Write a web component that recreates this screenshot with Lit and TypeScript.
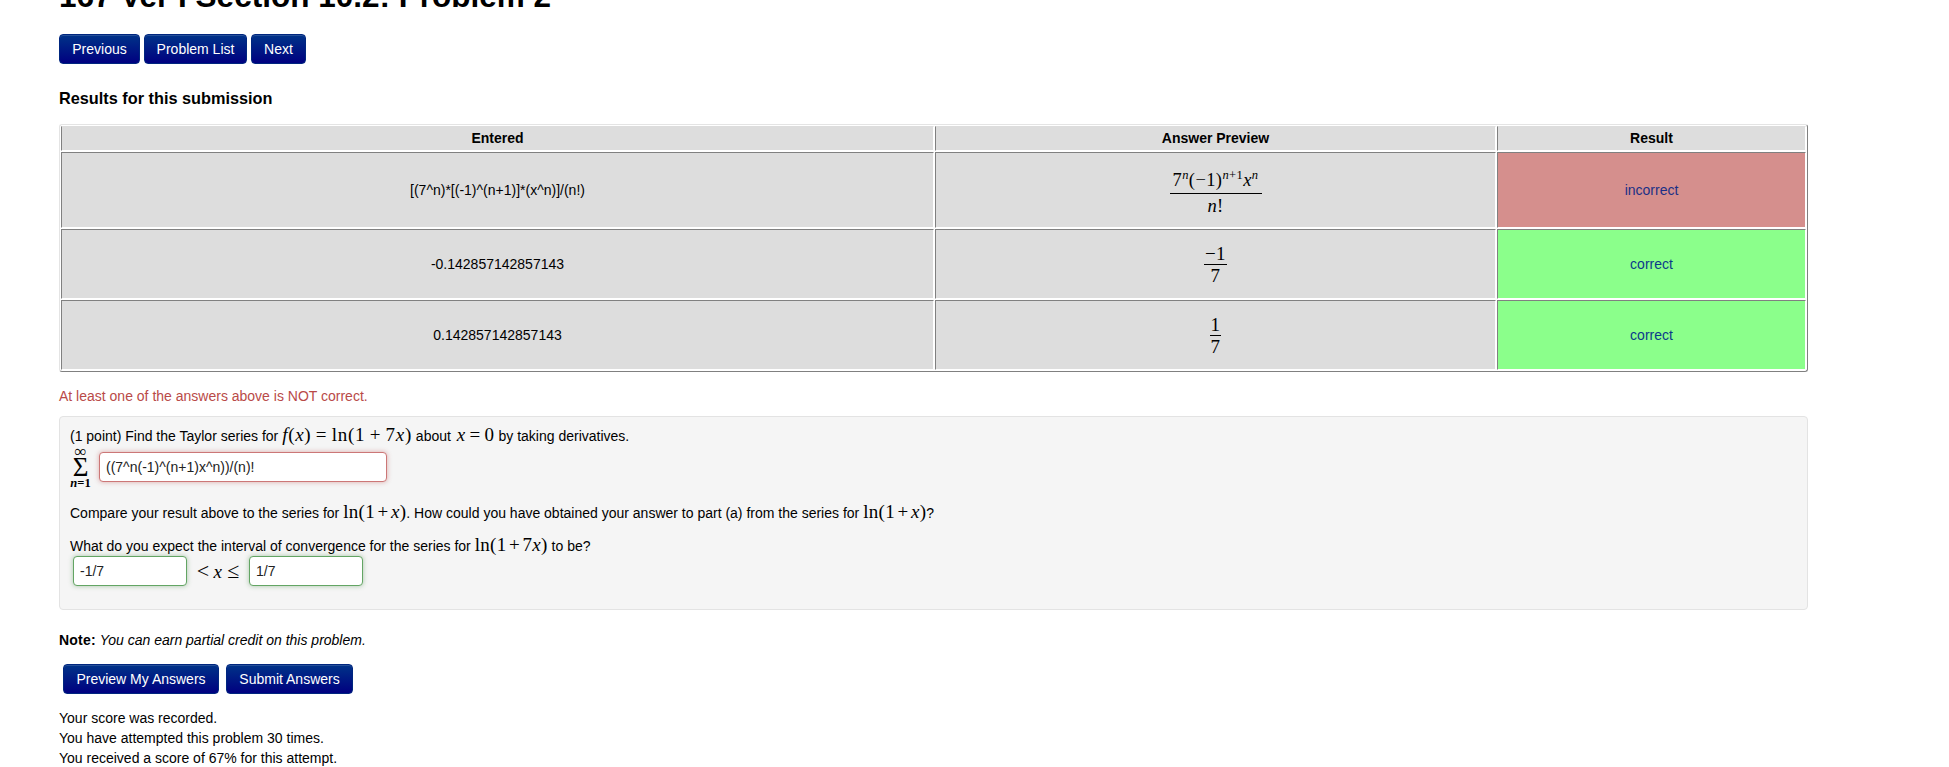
import { LitElement, html, css } from "lit";
import { customElement } from "lit/decorators.js";

@customElement("app-root")
export class AppRoot extends LitElement {
  static styles = css`
    :host {
      display: block;
      height: 767px;
      overflow: hidden;
      box-sizing: border-box;
      padding: 0 141px 0 59px;
      font: 14px/20px "Liberation Sans", Arial, sans-serif;
      color: #000;
      background: #fff;
    }
    h2 {
      margin: -24px 0 18px;
      font-size: 31.5px;
      line-height: 40px;
      font-weight: 700;
      white-space: nowrap;
    }
    .btn {
      display: block;
      box-sizing: border-box;
      height: 30px;
      padding: 4px 0;
      border: 1px solid #00267f;
      border-radius: 4px;
      background: linear-gradient(to bottom, #003388, #000080);
      box-shadow: inset 0 1px 0 rgba(255, 255, 255, 0.15);
      color: #fff;
      font: 14px/20px "Liberation Sans", Arial, sans-serif;
      text-align: center;
      white-space: nowrap;
    }
    .w81 {
      width: 81px;
    }
    .w103 {
      width: 103px;
    }
    .w55 {
      width: 55px;
    }
    .w156 {
      width: 156px;
    }
    .w127 {
      width: 127px;
    }
    .nav {
      display: flex;
      gap: 4px;
      margin-bottom: 24px;
    }
    h3 {
      margin: 0 0 16px;
      font-size: 16.3px;
      line-height: 20px;
      font-weight: 700;
    }
    table {
      table-layout: fixed;
      width: 1749px;
      border-collapse: separate;
      border-spacing: 1px;
      border: 1px solid;
      border-color: #e4e4e4 #808080 #808080 #e4e4e4;
      border-radius: 3px;
    }
    th,
    td {
      padding: 0;
      box-sizing: border-box;
      text-align: center;
      vertical-align: middle;
      background: #dddddd;
      border: 1px solid;
      border-color: #808080 #fff #fff #808080;
    }
    th {
      height: 25px;
      padding-bottom: 2px;
      font-weight: 700;
      border-top-color: #dddddd;
    }
    tr.tall td {
      height: 76px;
    }
    tr.std td {
      height: 70px;
    }
    td.wrong {
      background: #d58f8d;
      color: #1c2f86;
    }
    td.right {
      background: #8bff8b;
      color: #0b3a8a;
    }
    .m {
      font-family: "Liberation Serif", "Times New Roman", serif;
      font-size: 19px;
      letter-spacing: 0.7px;
      line-height: 0;
      white-space: nowrap;
    }
    .m i {
      font-style: italic;
    }
    .op {
      margin: 0 4.5px;
    }
    .m.narrow {
      letter-spacing: 0.3px;
    }
    .m.narrow .op {
      margin: 0 2.5px;
    }
    .m.after {
      margin-left: 2px;
    }
    .m.after .op {
      margin: 0 3.5px;
    }
    .frac {
      display: inline-flex;
      flex-direction: column;
      align-items: center;
      box-sizing: border-box;
      padding-top: 3px;
      font-family: "Liberation Serif", "Times New Roman", serif;
      font-size: 19px;
      letter-spacing: 0.4px;
      white-space: nowrap;
    }
    .frac.big {
      padding-top: 5px;
      font-size: 18.5px;
    }
    .num {
      height: 20px;
      line-height: 20px;
      border-bottom: 1px solid #000;
      padding: 0 1px;
      min-width: 6px;
    }
    .big .num {
      height: 24px;
      line-height: 22px;
      width: 92px;
      box-sizing: content-box;
      padding: 0;
    }
    .den {
      height: 20px;
      line-height: 18px;
      margin-top: 2px;
    }
    .big .den {
      line-height: 20px;
    }
    .frac sup {
      font-size: 12.5px;
      line-height: 0;
      vertical-align: 7px;
    }
    .msg {
      margin: 14px 0 10px;
      color: #b94a48;
    }
    .panel {
      box-sizing: border-box;
      height: 194px;
      padding: 9px 10px 0;
      background: #f5f5f5;
      border: 1px solid #e3e3e3;
      border-radius: 4px;
    }
    .panel p {
      margin: 0;
      height: 20px;
      white-space: nowrap;
    }
    .sum-row {
      display: flex;
      align-items: flex-start;
      gap: 8px;
      height: 57px;
    }
    .sum {
      display: flex;
      flex-direction: column;
      align-items: center;
      width: 21px;
      font-family: "Liberation Serif", "Times New Roman", serif;
    }
    .sum .top {
      height: 12px;
      line-height: 12px;
      font-size: 17px;
    }
    .sum .sigma {
      height: 18px;
      line-height: 18px;
      font-size: 27px;
    }
    .sum .bot {
      margin-top: 1px;
      height: 12px;
      line-height: 12px;
      font-size: 12.5px;
      font-weight: 700;
    }
    input {
      display: block;
      box-sizing: border-box;
      height: 30px;
      padding: 4px 6px;
      border-radius: 4px;
      background: #fff;
      font: 14px/20px "Liberation Sans", Arial, sans-serif;
      color: #222;
      outline: none;
    }
    .sum-input {
      width: 288px;
      margin-top: 6px;
      border: 1px solid #cc7777;
      box-shadow: 0 0 5px rgba(185, 74, 72, 0.45);
    }
    .ok {
      width: 114px;
      border: 1px solid #63a564;
      box-shadow: 0 0 5px rgba(70, 136, 71, 0.45);
    }
    .spacer {
      height: 13px;
    }
    .range {
      display: flex;
      align-items: center;
      margin: 0 0 0 3px;
    }
    .range .m {
      width: 62px;
      text-align: center;
    }
    .rel {
      font-size: 22px;
      letter-spacing: 0;
    }
    .note {
      margin: 20px 0 14px;
    }
    .note b {
      letter-spacing: 0.2px;
    }
    .actions {
      display: flex;
      gap: 7px;
      margin: 0 0 14px 4px;
    }
  `;

  render() {
    return html`
      <h2>167 Ver I Section 10.2: Problem 2</h2>
      <div class="nav">
        <button class="btn w81">Previous</button>
        <button class="btn w103">Problem List</button>
        <button class="btn w55">Next</button>
      </div>
      <h3>Results for this submission</h3>
      <table>
        <colgroup>
          <col style="width:873px" />
          <col style="width:561px" />
          <col style="width:309px" />
        </colgroup>
        <tr>
          <th>Entered</th>
          <th>Answer Preview</th>
          <th>Result</th>
        </tr>
        <tr class="tall">
          <td>[(7^n)*[(-1)^(n+1)]*(x^n)]/(n!)</td>
          <td>
            <span class="frac big">
              <span class="num">7<sup><i>n</i></sup>(−1)<sup><i>n</i>+1</sup><i>x</i><sup><i>n</i></sup></span>
              <span class="den"><i>n</i>!</span>
            </span>
          </td>
          <td class="wrong">incorrect</td>
        </tr>
        <tr class="std">
          <td>-0.142857142857143</td>
          <td>
            <span class="frac"><span class="num">−1</span><span class="den">7</span></span>
          </td>
          <td class="right">correct</td>
        </tr>
        <tr class="std">
          <td>0.142857142857143</td>
          <td>
            <span class="frac"><span class="num">1</span><span class="den">7</span></span>
          </td>
          <td class="right">correct</td>
        </tr>
      </table>
      <div class="msg">At least one of the answers above is NOT correct.</div>
      <div class="panel">
        <p>
          (1 point) Find the Taylor series for
          <span class="m"><i>f</i>(<i>x</i>)<span class="op">=</span>ln(1<span class="op">+</span>7<i>x</i>)</span>
          about <span class="m after"><i>x</i><span class="op">=</span>0</span> by taking derivatives.
        </p>
        <div class="sum-row">
          <div class="sum">
            <span class="top">∞</span>
            <span class="sigma">Σ</span>
            <span class="bot"><i>n</i>=1</span>
          </div>
          <input class="sum-input" .value=${"((7^n(-1)^(n+1)x^n))/(n)!"} />
        </div>
        <p>
          Compare your result above to the series for
          <span class="m narrow">ln(1<span class="op">+</span><i>x</i>)</span>. How could you have obtained your answer to part
          (a) from the series for <span class="m narrow">ln(1<span class="op">+</span><i>x</i>)</span>?
        </p>
        <div class="spacer"></div>
        <p>
          What do you expect the interval of convergence for the series for
          <span class="m narrow">ln(1<span class="op">+</span>7<i>x</i>)</span> to be?
        </p>
        <div class="range">
          <input class="ok" .value=${"-1/7"} />
          <span class="m"><span class="rel">&lt;</span><span class="op"><i>x</i></span><span class="rel">≤</span></span>
          <input class="ok" .value=${"1/7"} />
        </div>
      </div>
      <div class="note"><b>Note:</b> <i>You can earn partial credit on this problem.</i></div>
      <div class="actions">
        <button class="btn w156">Preview My Answers</button>
        <button class="btn w127">Submit Answers</button>
      </div>
      <div class="score">
        Your score was recorded.<br />
        You have attempted this problem 30 times.<br />
        You received a score of 67% for this attempt.
      </div>
    `;
  }
}
